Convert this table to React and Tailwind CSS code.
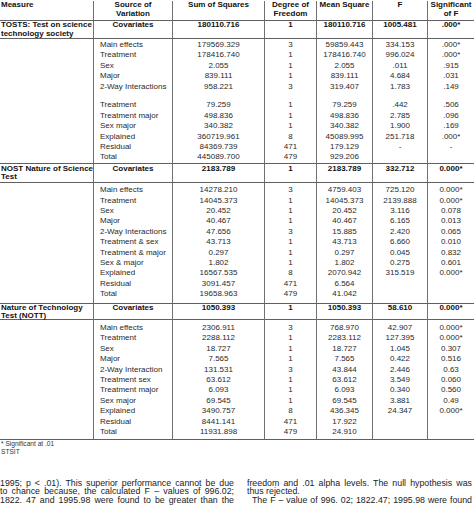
import React from "react";

const G = "grid grid-cols-[93px_79px_92px_52px_56px_55px_47px]";

const tosts = [
  ["Main effects", "179569.329", "3", "59859.443", "334.153", ".000*"],
  ["Treatment", "178416.740", "1", "178416.740", "996.024", ".000*"],
  ["Sex", "2.055", "1", "2.055", ".011", ".915"],
  ["Major", "839.111", "1", "839.111", "4.684", ".031"],
  ["2-Way Interactions", "958.221", "3", "319.407", "1.783", ".149"],
  null,
  ["Treatment", "79.259", "1", "79.259", ".442", ".506"],
  ["Treatment major", "498.836", "1", "498.836", "2.785", ".096"],
  ["Sex major", "340.382", "1", "340.382", "1.900", ".169"],
  ["Explained", "360719.961", "8", "45089.995", "251.718", ".000*"],
  ["Residual", "84369.739", "471", "179.129", "-", "-"],
  ["Total", "445089.700", "479", "929.206", "", ""],
];

const nost = [
  ["Main effects", "14278.210", "3", "4759.403", "725.120", "0.000*"],
  ["Treatment", "14045.373", "1", "14045.373", "2139.888", "0.000*"],
  ["Sex", "20.452", "1", "20.452", "3.116", "0.078"],
  ["Major", "40.467", "1", "40.467", "6.165", "0.013"],
  ["2-Way Interactions", "47.656", "3", "15.885", "2.420", "0.065"],
  ["Treatment & sex", "43.713", "1", "43.713", "6.660", "0.010"],
  ["Treatment &  major", "0.297", "1", "0.297", "0.045", "0.832"],
  ["Sex & major", "1.802", "1", "1.802", "0.275", "0.601"],
  ["Explained", "16567.535", "8", "2070.942", "315.519", "0.000*"],
  ["Residual", "3091.457", "471", "6.564", "", ""],
  ["Total", "19658.963", "479", "41.042", "", ""],
];

const nott = [
  ["Main effects", "2306.911", "3", "768.970", "42.907", "0.000*"],
  ["Treatment", "2288.112", "1", "2283.112", "127.395", "0.000*"],
  ["Sex", "18.727", "1", "18.727", "1.045", "0.307"],
  ["Major", "7.565", "1", "7.565", "0.422", "0.516"],
  ["2-Way Interaction", "131.531", "3", "43.844", "2.446", "0.63"],
  ["Treatment sex", "63.612", "1", "63.612", "3.549", "0.060"],
  ["Treatment major", "6.093", "1", "6.093", "0.340", "0.560"],
  ["Sex major", "69.545", "1", "69.545", "3.881", "0.49"],
  ["Explained", "3490.757", "8", "436.345", "24.347", "0.000*"],
  ["Residual", "8441.141", "471", "17.922", "", ""],
  ["Total", "11931.898", "479", "24.910", "", ""],
];

function Cell({ i, children, align, inner = "" }) {
  const border = i > 0 ? "border-l border-[#707070]" : "";
  const al =
    align === "left"
      ? "text-left pl-[6px]"
      : align === "first"
      ? "text-left pl-[1px]"
      : "text-center";
  return (
    <div className={`${border} ${al} whitespace-nowrap`}>
      <div className={inner}>{children}</div>
    </div>
  );
}

function DataRow({ r, h }) {
  const vals = r ? ["", ...r] : ["", "", "", "", "", "", ""];
  return (
    <div className={`${G} ${h}`}>
      {vals.map((v, i) => (
        <Cell key={i} i={i} align={i === 0 ? "first" : i === 1 ? "left" : "center"}>
          {v}
        </Cell>
      ))}
    </div>
  );
}

function Spacer({ h }) {
  return <DataRow r={null} h={h} />;
}

function CovRow({ measure, vals, h, inner }) {
  const all = [measure, "Covariates", ...vals];
  return (
    <div className={`${G} ${h} font-bold text-[#111] border-b border-[#606060]`}>
      {all.map((v, i) => (
        <Cell key={i} i={i} align={i === 0 ? "first" : "center"} inner={inner}>
          {v}
        </Cell>
      ))}
    </div>
  );
}

function Block({ rows, top, bottom, blankH }) {
  return (
    <div className="border-b border-[#606060] leading-[10.4px]">
      <Spacer h={top} />
      {rows.map((r, i) =>
        r ? <DataRow key={i} r={r} h="h-[10.4px]" /> : <Spacer key={i} h={blankH} />
      )}
      <Spacer h={bottom} />
    </div>
  );
}

export default function App() {
  return (
    <div className="w-[474px] h-[508px] overflow-hidden bg-white font-['Liberation_Sans',Arial,sans-serif] text-[#2a2a2a] text-[8px]">
      {/* header */}
      <div className={`${G} h-[21px] pt-[1px] font-bold text-[#111] leading-[8.5px] border-b border-[#606060]`}>
        <Cell i={0} align="first">Measure</Cell>
        <Cell i={1}>Source of<br />Variation</Cell>
        <Cell i={2}>Sum of Squares</Cell>
        <Cell i={3}>Degree of<br />Freedom</Cell>
        <Cell i={4}>Mean Square</Cell>
        <Cell i={5}>F</Cell>
        <Cell i={6}>Significant<br />of F</Cell>
      </div>

      <CovRow
        measure={<>TOSTS: Test on science<br />technology society</>}
        vals={["180110.716", "1", "180110.716", "1005.481", ".000*"]}
        h="h-[18px]"
        inner="leading-[9px] -mt-[1.5px]"
      />
      <Block rows={tosts} top="h-[1px]" bottom="h-[0px]" blankH="h-[8.5px]" />

      <CovRow
        measure={<>NOST Nature of Science<br />Test</>}
        vals={["2183.789", "1", "2183.789", "332.712", "0.000*"]}
        h="h-[19px]"
        inner="leading-[8.5px] mt-[1px]"
      />
      <Block rows={nost} top="h-[2.5px]" bottom="h-[3px]" blankH="h-[8.5px]" />

      <CovRow
        measure={<>Nature of Technology<br />Test (NOTT)</>}
        vals={["1050.393", "1", "1050.393", "58.610", "0.000*"]}
        h="h-[16px]"
        inner="leading-[8.5px]"
      />
      <Block rows={nott} top="h-[3.5px]" bottom="h-[1.5px]" blankH="h-[8.5px]" />

      {/* footnote */}
      <div className="text-[6.6px] leading-[8.5px] pl-[1px] text-[#333]">
        <div>* Significant at .01</div>
        <div>STSIT</div>
      </div>

      {/* paragraph */}
      <div className="mt-[22px] flex text-[8.8px] leading-[8.5px] text-[#222]">
        <div className="w-[234px] text-justify">
          <div className="[text-align-last:justify]">1995; p &lt; .01). This superior performance cannot be due</div>
          <div className="[text-align-last:justify]">to chance because, the calculated F – values of 996.02;</div>
          <div className="[text-align-last:justify]">1822. 47 and 1995.98 were found to be greater than the</div>
        </div>
        <div className="ml-[13px] w-[225px] text-justify">
          <div className="[text-align-last:justify]">freedom and .01 alpha levels. The null hypothesis was</div>
          <div>thus rejected.</div>
          <div className="pl-[5px] [text-align-last:justify]">The F – value of 996. 02; 1822.47; 1995.98 were found</div>
        </div>
      </div>
    </div>
  );
}
